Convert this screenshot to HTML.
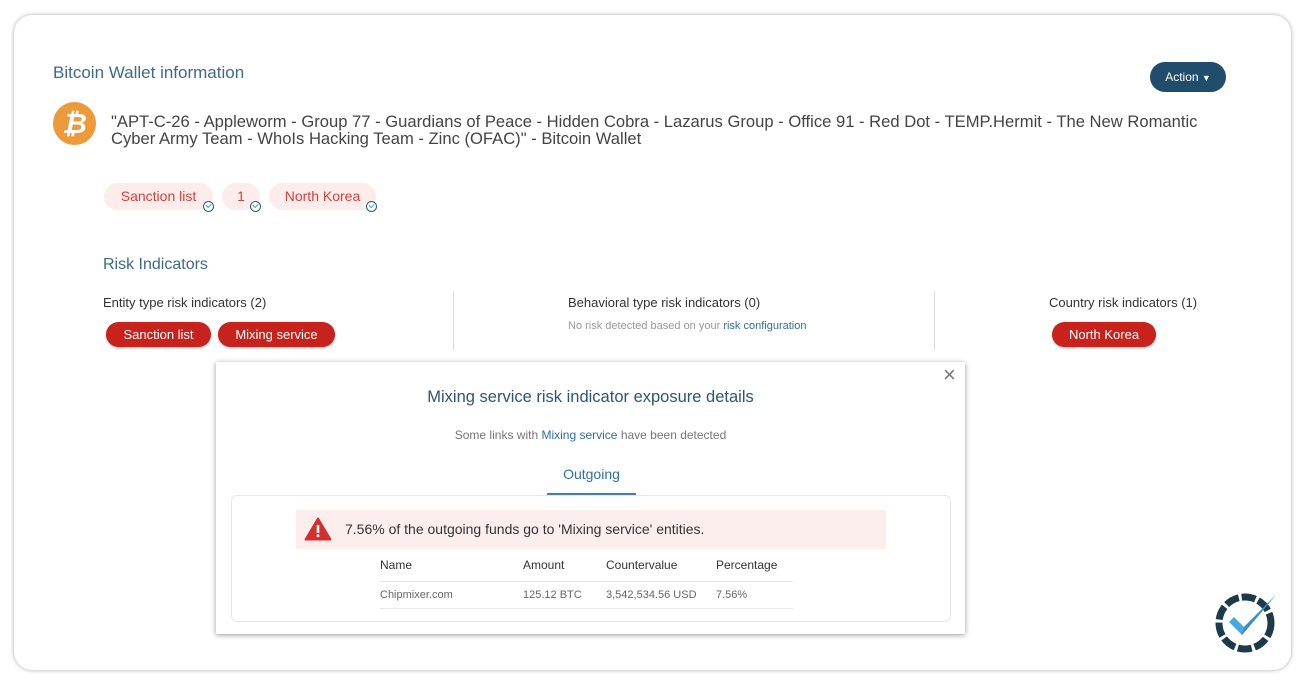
<!DOCTYPE html>
<html><head><meta charset="utf-8"><style>
*{margin:0;padding:0;box-sizing:border-box}
body{width:1307px;height:685px;background:#fff;font-family:"Liberation Sans",sans-serif;position:relative;overflow:hidden}
.a{position:absolute;white-space:nowrap}
.card{position:absolute;left:14px;top:15px;width:1277px;height:655px;border-radius:18px;background:#fff;box-shadow:0 0 4px rgba(0,0,0,.35)}
.pill{position:absolute;height:27px;border-radius:14px;background:#fdecec;color:#d9403a;font-size:14px;line-height:27px;text-align:center}
.red{position:absolute;height:25px;border-radius:13px;background:#c8221c;color:#fff;font-size:13px;line-height:25px;text-align:center;box-shadow:0 1px 2px rgba(0,0,0,.3)}
.chk{position:absolute;width:11px;height:11px;border-radius:50%;border:1.5px solid #2a5c7c;background:#fff}
.chk:after{content:"";position:absolute;left:2px;top:1px;width:4px;height:3px;border-left:1.5px solid #3a9fe0;border-bottom:1.5px solid #3a9fe0;transform:rotate(-45deg)}
</style></head><body>
<div class="card"></div>
<div class="a" style="left:53px;top:63px;font-size:17px;color:#3e6a87">Bitcoin Wallet information</div>
<div class="a" style="left:1150px;top:62px;width:76px;height:30px;border-radius:15px;background:#1f4d6b;color:#fff;font-size:12px;line-height:30px;text-align:center">Action <span style="font-size:9px">▼</span></div>
<div class="a" style="left:53px;top:102px;width:43px;height:43px;border-radius:50%;background:#ed9a3b;color:#fff;font-size:28px;font-weight:bold;line-height:43px;text-align:center;font-style:italic">₿</div>
<div class="a" style="left:111px;top:113px;font-size:16.6px;color:#444;line-height:17px">"APT-C-26 - Appleworm - Group 77 - Guardians of Peace - Hidden Cobra - Lazarus Group - Office 91 - Red Dot - TEMP.Hermit - The New Romantic<br>Cyber Army Team - WhoIs Hacking Team - Zinc (OFAC)" - Bitcoin Wallet</div>
<div class="pill" style="left:104px;top:183px;width:109px">Sanction list</div><div class="chk" style="left:203px;top:201px"></div>
<div class="pill" style="left:222px;top:183px;width:38px">1</div><div class="chk" style="left:250px;top:201px"></div>
<div class="pill" style="left:269px;top:183px;width:107px">North Korea</div><div class="chk" style="left:366px;top:201px"></div>
<div class="a" style="left:103px;top:256px;font-size:16px;color:#3e6a87">Risk Indicators</div>
<div class="a" style="left:103px;top:295px;font-size:13px;color:#333">Entity type risk indicators (2)</div>
<div class="red" style="left:106px;top:322px;width:105px">Sanction list</div>
<div class="red" style="left:218px;top:322px;width:117px">Mixing service</div>
<div class="a" style="left:453px;top:291px;width:1px;height:59px;background:#ddd"></div>
<div class="a" style="left:568px;top:295px;font-size:13px;color:#333">Behavioral type risk indicators (0)</div>
<div class="a" style="left:568px;top:320px;font-size:11px;color:#999">No risk detected based on your <span style="color:#2f6f9b">risk configuration</span></div>
<div class="a" style="left:934px;top:291px;width:1px;height:59px;background:#ddd"></div>
<div class="a" style="left:1049px;top:295px;font-size:13px;color:#333">Country risk indicators (1)</div>
<div class="red" style="left:1052px;top:322px;width:104px">North Korea</div>
<div class="a" style="left:216px;top:362px;width:749px;height:272px;background:#fff;box-shadow:0 1px 5px rgba(0,0,0,.4)"></div>
<div class="a" style="left:943px;top:362px;font-size:22px;color:#777">×</div>
<div class="a" style="left:216px;top:388px;width:749px;text-align:center;font-size:16.5px;color:#2d5673">Mixing service risk indicator exposure details</div>
<div class="a" style="left:216px;top:428px;width:749px;text-align:center;font-size:12px;color:#777">Some links with <span style="color:#2f6f9b">Mixing service</span> have been detected</div>
<div class="a" style="left:547px;top:466px;width:89px;text-align:center;font-size:14px;color:#2f6f9b">Outgoing</div>
<div class="a" style="left:231px;top:495px;width:720px;height:127px;border:1px solid #e6e6e6;border-radius:6px"></div>
<div class="a" style="left:547px;top:493px;width:89px;height:2px;background:#4a7ea3"></div>
<div class="a" style="left:296px;top:510px;width:590px;height:39px;background:#fdeeee"></div>
<svg class="a" style="left:304px;top:517px" width="28" height="24" viewBox="0 0 28 24"><path d="M14 1.5 L26.5 22.5 H1.5 Z" fill="#d32f2f" stroke="#d32f2f" stroke-width="2" stroke-linejoin="round"/><rect x="12.7" y="8" width="2.6" height="8" fill="#fff"/><rect x="12.7" y="17.5" width="2.6" height="2.6" fill="#fff"/></svg>
<div class="a" style="left:345px;top:521px;font-size:14px;color:#333">7.56% of the outgoing funds go to 'Mixing service' entities.</div>
<div class="a" style="left:380px;top:558px;font-size:12px;color:#333">Name</div>
<div class="a" style="left:523px;top:558px;font-size:12px;color:#333">Amount</div>
<div class="a" style="left:606px;top:558px;font-size:12px;color:#333">Countervalue</div>
<div class="a" style="left:716px;top:558px;font-size:12px;color:#333">Percentage</div>
<div class="a" style="left:380px;top:581px;width:413px;height:1px;background:#e6e6e6"></div>
<div class="a" style="left:380px;top:589px;font-size:11px;color:#666">Chipmixer.com</div>
<div class="a" style="left:523px;top:589px;font-size:11px;color:#666">125.12 BTC</div>
<div class="a" style="left:606px;top:589px;font-size:11px;color:#666">3,542,534.56 USD</div>
<div class="a" style="left:716px;top:589px;font-size:11px;color:#666">7.56%</div>
<div class="a" style="left:380px;top:608px;width:413px;height:1px;background:#e6e6e6"></div>
<svg class="a" style="left:1210px;top:590px" width="70" height="66" viewBox="0 0 70 66">
<circle cx="35" cy="33" r="26" fill="none" stroke="#1d3a4a" stroke-width="7" stroke-dasharray="14 3"/>
<path d="M19 32 L32 45 L66 5 L34 37 L24 27 Z" fill="#4aa8e0"/>
<path d="M32 45 L34 37 L66 5 Z" fill="#3a8cc4"/>
</svg>
</body></html>
